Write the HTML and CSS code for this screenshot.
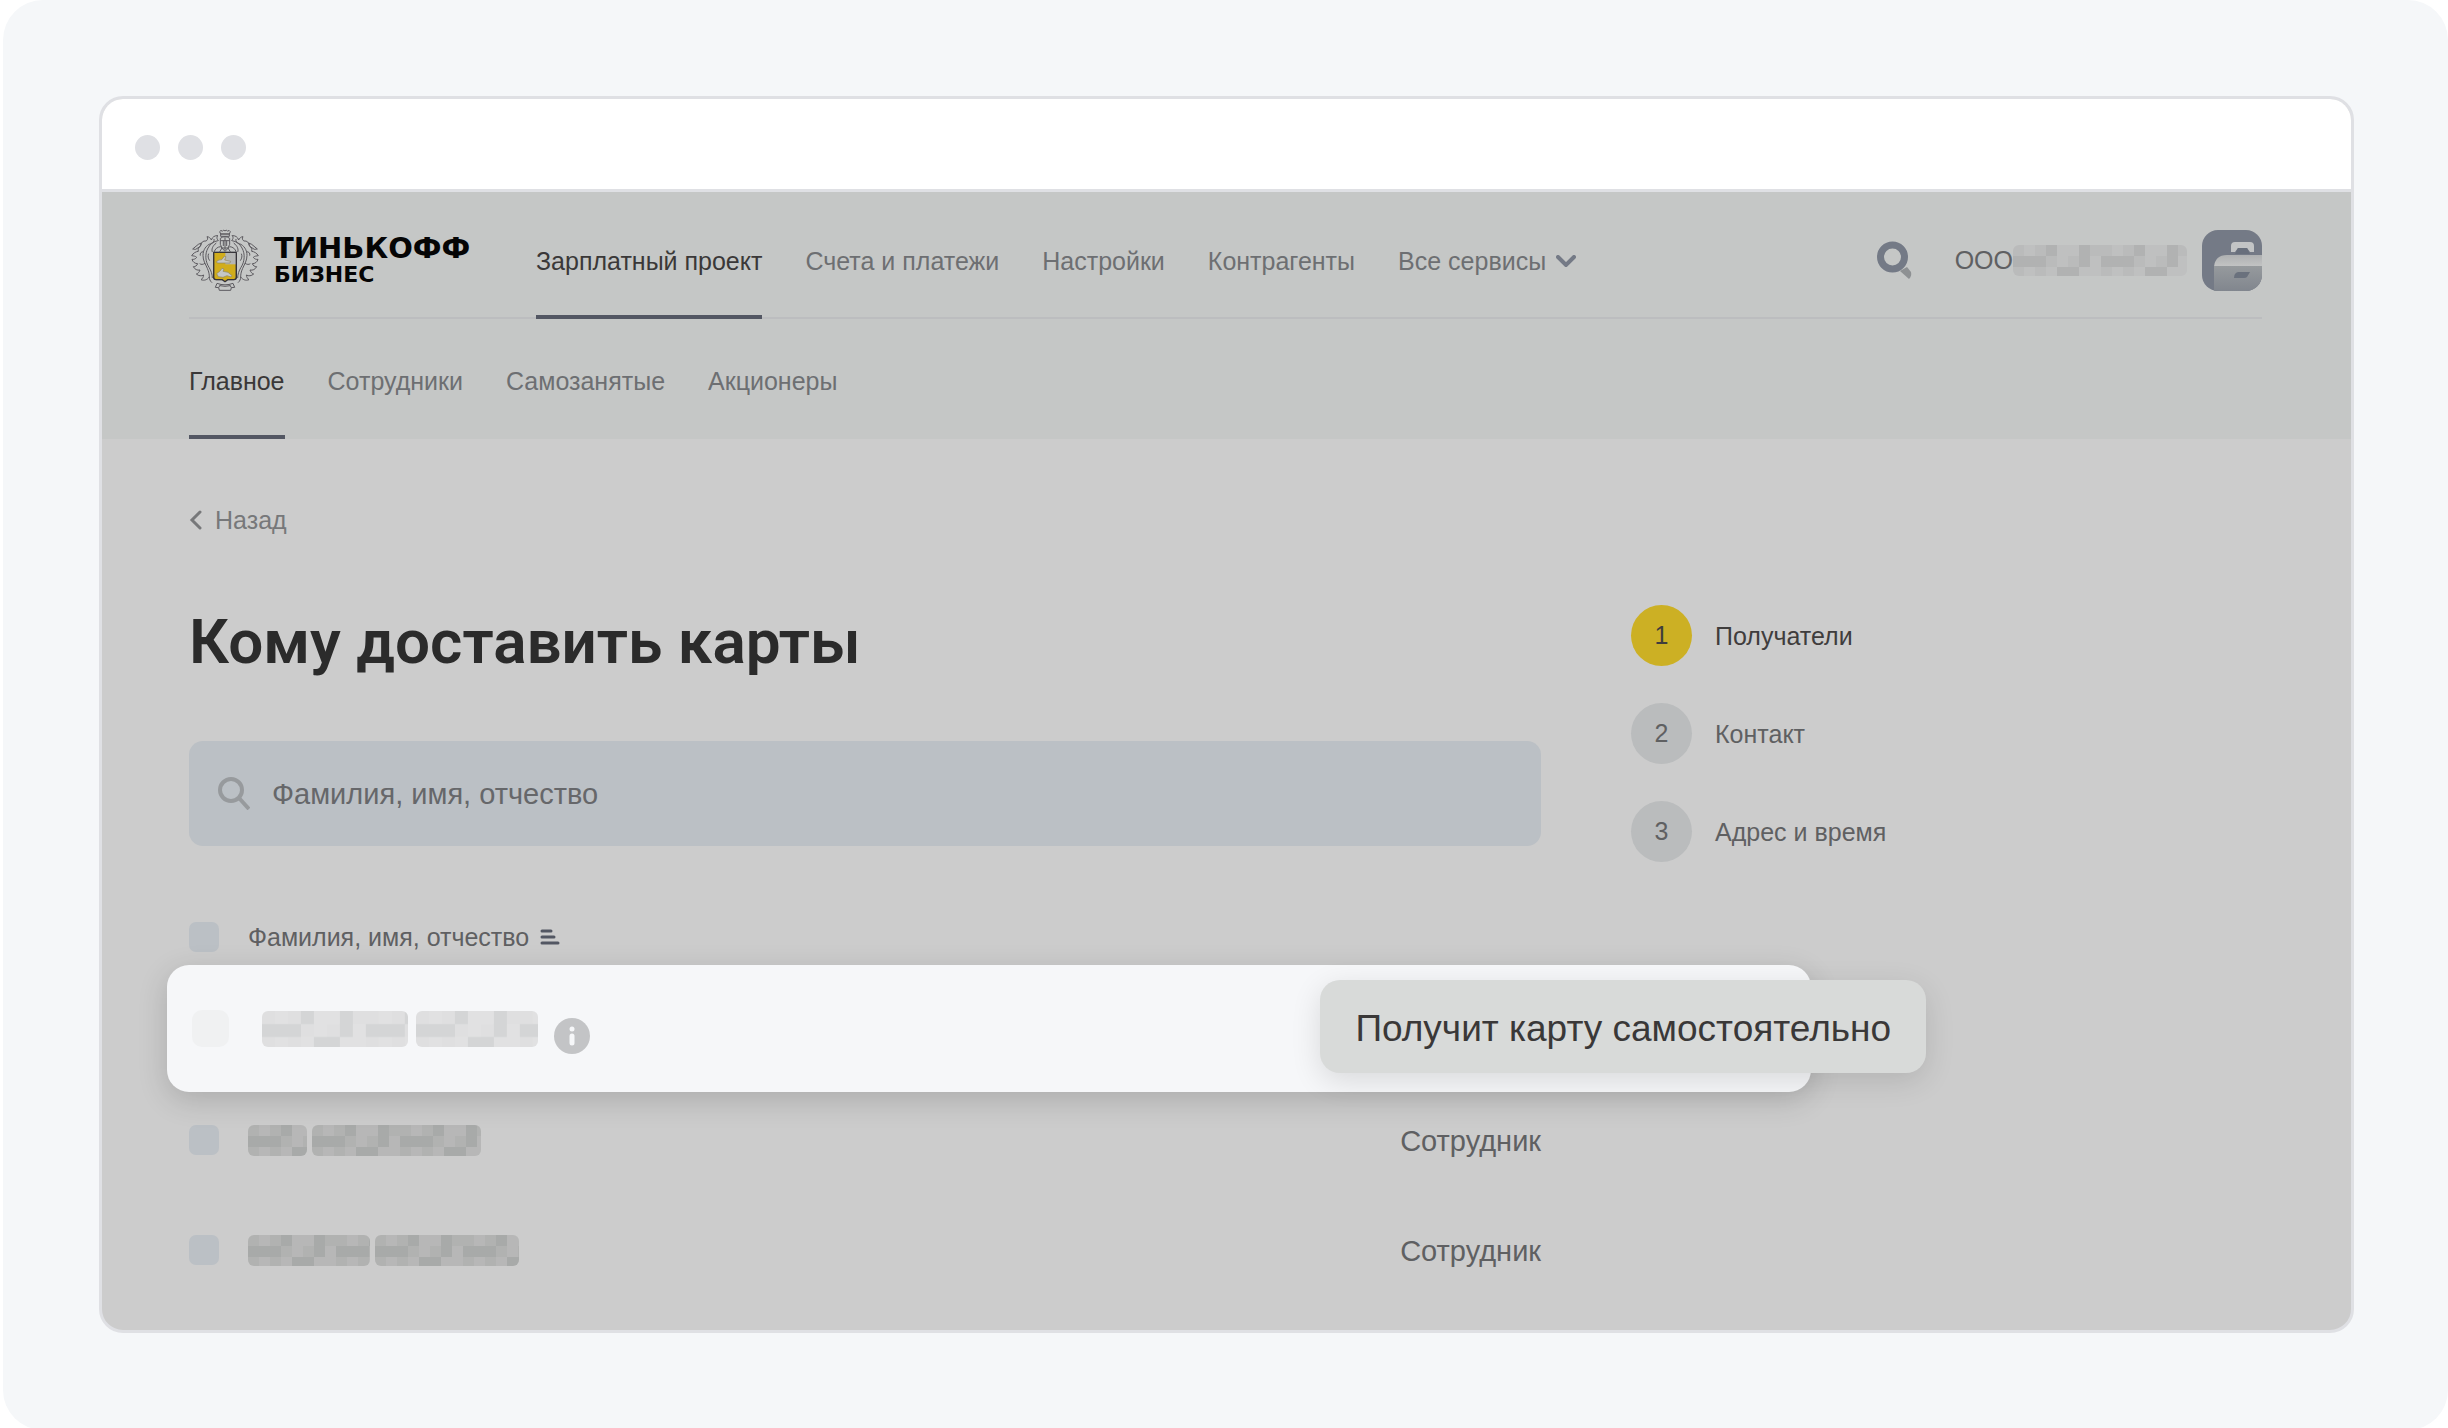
FILE: index.html
```html
<!DOCTYPE html>
<html lang="ru">
<head>
  <meta charset="UTF-8" />
  <title>Кому доставить карты</title>
  <meta name="viewport" content="width=device-width, initial-scale=1.0" />
  <link rel="stylesheet" href="styles.css">
</head>
<body>
  <!-- shared pattern for hidden names -->
  <svg class="defs" aria-hidden="true">
    <defs>
      <pattern id="mosaic" width="88" height="31" patternUnits="userSpaceOnUse">
        <path class="mosaic-light" d="M11 0h11v11H11zM44 0h22v11H44zM44 11h11v11H44zM77 11h11v11H77zM11 22h11v9H11zM33 22h11v9H33zM66 22h22v9H66z"/>
        <path class="mosaic-dark" d="M33 0h11v11H33zM66 0h11v11H66zM0 11h33v11H0zM66 11h11v11H66zM44 22h22v9H44z"/>
      </pattern>
      <pattern id="mosaic-lg" href="#mosaic" patternTransform="scale(1.18)"/>
    </defs>
  </svg>

  <div class="stage">
    <div class="window">
      <div class="titlebar"><span class="dot"></span><span class="dot"></span><span class="dot"></span></div>

      <header class="header">
        <div class="topbar">
          <a class="logo" href="#">
            <svg class="crest" viewBox="15 13 204 186" aria-hidden="true">
              <g id="wing">
                <path d="M98 48C91 43 92 36 96 33C86 32 79 37 76 46C74 41 69 36 63 36C67 42 64 47 60 49C51 48 45 53 44 63C38 67 35 74 37 80C29 81 22 85 17 93C23 94 28 94 32 98C29 103 23 105 18 104C20 112 27 117 35 117C33 123 28 126 22 126C26 134 34 138 42 136C40 142 37 146 31 148C38 154 46 155 53 151C52 157 50 162 45 165C55 169 64 165 70 157C70 163 72 169 78 174"/>
                <path d="M96 48C83 50 72 58 66 70C56 88 58 111 69 128C75 138 79 149 79 160M84 43C86 50 81 55 74 57C60 62 51 76 51 92C51 108 58 117 64 131C69 142 70 150 70 157M91 55C79 64 76 75 79 82M53 81C45 81 41 86 43 93M57 116C51 120 45 120 41 117M71 108C66 101 65 93 68 87M20 73L37 59L46 55L43 65L29 74z"/>
              </g>
              <use href="#wing" transform="matrix(-1 0 0 1 234 0)"/>
              <path class="crest-shield" d="M83 83h68v75q0 7-7 7h-19l-8 6-8-6H90q-7 0-7-7z"/>
              <path class="crest-gray" d="M118 83h33v36h-33z"/>
              <path class="crest-fill crest-beast" d="M91 111q8-7 16-6l8-10 5 1-4 10 18 4-2 5H94zM92 147l10-8 6-8 6 2-3 7 15 3 12 10-3 4-12-4-12 5-14-2z"/>
              <path class="crest-border" d="M83 83h68v75q0 7-7 7h-19l-8 6-8-6H90q-7 0-7-7z"/>
              <path class="crest-fill" d="M101 21l4-4 4 3 4-4 4 3 4-3 4 4 4-3 4 4-3 7h-26zM104 28h26v7h-26zM103 41q14-10 28 0v18l-5 11h-18l-5-11z"/>
              <path d="M104 48h26M112 48v16M122 48v16M117 38v38M84 83q5-16 20-17l13 14 14-14q15 1 20 17M108 70l-8 13M126 70l8 13"/>
              <path class="crest-fill" d="M93 176q24 9 48 0l5 12-10 1-2 8h-34l-2-8-10-1z"/>
              <path d="M102 183q15 4 30 0M98 189l5-9M136 189l-5-9"/>
            </svg>
            <span class="logo-text">
              <span class="logo-name">ТИНЬКОФФ</span>
              <span class="logo-sub">БИЗНЕС</span>
            </span>
          </a>

          <nav class="nav">
            <a class="nav-link active" href="#">Зарплатный проект</a>
            <a class="nav-link" href="#">Счета и платежи</a>
            <a class="nav-link" href="#">Настройки</a>
            <a class="nav-link" href="#">Контрагенты</a>
            <button class="nav-link nav-more" type="button">
              Все сервисы
              <svg width="20" height="12" viewBox="0 0 20 12" aria-hidden="true"><path d="M2 2l8 8 8-8"/></svg>
            </button>
          </nav>

          <div class="account">
            <button class="icon-button" type="button" aria-label="Поиск">
              <svg width="35" height="38" viewBox="0 0 35 38" aria-hidden="true">
                <path d="M23 30l7-4 4 5q1 4-2 7z" fill="#8e9193"/>
                <circle cx="15.500" cy="16" r="12" fill="none" stroke="#747a86" stroke-width="7"/>
              </svg>
            </button>
            <div class="company">ООО <svg class="hidden-name hidden-soft" width="174" height="31"><rect width="100%" height="100%" fill="url(#mosaic)"/></svg></div>
            <svg class="avatar" width="60" height="61" viewBox="0 0 60 61" aria-hidden="true">
              <defs>
                <linearGradient id="lid" x1="0" y1="0" x2="0" y2="1"><stop offset="0" stop-color="#aeb0b1"/><stop offset="1" stop-color="#c4c5c5"/></linearGradient>
                <linearGradient id="case" x1="0" y1="0" x2="0" y2="1"><stop offset="0" stop-color="#969a9d"/><stop offset="1" stop-color="#81868e"/></linearGradient>
              </defs>
              <path d="M29 22v-6q0-4 4-4h15q4 0 4 4v6h-4l-3-4H36l-3 4z" fill="#c2c4c5"/>
              <path d="M36 18h9l3 6H33z" fill="#686f7c"/>
              <path d="M12 37q1-12 13-12h35v12z" fill="url(#lid)"/>
              <path d="M12 36h48v25H12z" fill="url(#case)"/>
              <path d="M36 42h12l-3 5q-1 1-3 1H32q0-5 4-6z" fill="#6a717d"/>
            </svg>
          </div>
        </div>

        <nav class="nav subnav">
          <a class="nav-link active" href="#">Главное</a>
          <a class="nav-link" href="#">Сотрудники</a>
          <a class="nav-link" href="#">Самозанятые</a>
          <a class="nav-link" href="#">Акционеры</a>
        </nav>
      </header>

      <main class="page">
        <a class="back" href="#">
          <svg width="14" height="20" viewBox="0 0 14 20" aria-hidden="true"><path d="M11 2l-8 8 8 8"/></svg>
          Назад
        </a>

        <div class="columns">
          <section class="recipients">
            <h1>Кому доставить карты</h1>

            <label class="search">
              <svg width="32" height="33" viewBox="0 0 32 33" aria-hidden="true"><circle cx="13" cy="13" r="11"/><path d="M21 21l10 11"/></svg>
              <input type="text" placeholder="Фамилия, имя, отчество" aria-label="Фамилия, имя, отчество" />
            </label>

            <table class="people">
              <thead>
                <tr>
                  <th class="col-check"><input type="checkbox" class="check" aria-label="Выбрать всех" /></th>
                  <th colspan="2">
                    <span class="sort">Фамилия, имя, отчество
                      <svg width="20" height="17" viewBox="0 0 20 17" aria-hidden="true"><path d="M2 2h9M2 8h12M2 14h16"/></svg>
                    </span>
                  </th>
                </tr>
              </thead>
              <tbody>
                <tr>
                  <td class="col-card" colspan="3">
                    <div class="card">
                      <input type="checkbox" class="check check-lg" aria-label="Выбрать сотрудника" />
                      <div class="names names-lg">
                        <svg class="hidden-name hidden-light" width="146" height="36"><rect width="100%" height="100%" fill="url(#mosaic-lg)"/></svg>
                        <svg class="hidden-name hidden-light" width="122" height="36"><rect width="100%" height="100%" fill="url(#mosaic-lg)"/></svg>
                      </div>
                      <svg class="info" width="36" height="36" viewBox="0 0 36 36" aria-hidden="true">
                        <circle cx="18" cy="18" r="18" fill="#c3c4c6"/>
                        <circle cx="18" cy="11" r="2.500" fill="#f6f7f9"/>
                        <path d="M18 18v7" stroke="#f6f7f9" stroke-width="5" stroke-linecap="round"/>
                      </svg>
                      <div class="tooltip">Получит карту самостоятельно</div>
                    </div>
                  </td>
                </tr>
                <tr>
                  <td class="col-check"><input type="checkbox" class="check" aria-label="Выбрать сотрудника" /></td>
                  <td>
                    <div class="names">
                      <svg class="hidden-name" width="59" height="31"><rect width="100%" height="100%" fill="url(#mosaic)"/></svg>
                      <svg class="hidden-name" width="169" height="31"><rect width="100%" height="100%" fill="url(#mosaic)"/></svg>
                    </div>
                  </td>
                  <td class="role">Сотрудник</td>
                </tr>
                <tr>
                  <td class="col-check"><input type="checkbox" class="check" aria-label="Выбрать сотрудника" /></td>
                  <td>
                    <div class="names">
                      <svg class="hidden-name" width="122" height="31"><rect width="100%" height="100%" fill="url(#mosaic)"/></svg>
                      <svg class="hidden-name" width="144" height="31"><rect width="100%" height="100%" fill="url(#mosaic)"/></svg>
                    </div>
                  </td>
                  <td class="role">Сотрудник</td>
                </tr>
              </tbody>
            </table>
          </section>

          <ol class="steps">
            <li class="step current"><span class="step-num">1</span>Получатели</li>
            <li class="step"><span class="step-num">2</span>Контакт</li>
            <li class="step"><span class="step-num">3</span>Адрес и время</li>
          </ol>
        </div>
      </main>
    </div>
  </div>
</body>
</html>
```
FILE: styles.css
```css
* { box-sizing: border-box; }

body {
  margin: 0;
  background: #fff;
  color: #5f6062;
  font-family: "Liberation Sans", Arial, sans-serif;
  font-size: 25px;
  line-height: 30px;
}

a { color: inherit; text-decoration: none; }

button {
  padding: 0;
  border: none;
  background: none;
  color: inherit;
  font: inherit;
}

svg { display: block; flex: none; }

.defs { position: absolute; width: 0; height: 0; }

/* outer frame */
.stage {
  min-height: 100vh;
  margin-left: 3px;
  padding: 96px 94px 97px 96px;
  background: #f5f7f9;
  border-radius: 40px;
}

.window {
  overflow: hidden;
  background: #ccc;
  border: 3px solid #dfe0e4;
  border-radius: 24px;
}

.titlebar {
  display: flex;
  align-items: center;
  gap: 18px;
  height: 93px;
  padding: 6px 33px 0;
  background: #fff;
  border-bottom: 3px solid #dfe0e4;
}

.dot {
  width: 25px;
  height: 25px;
  border-radius: 50%;
  background: #dfe0e4;
}

/* header */
.header {
  padding: 0 89px 0 87px;
  background: #c5c7c6;
}

.topbar {
  display: flex;
  align-items: center;
  padding-top: 11px;
  border-bottom: 2px solid #bcbdbf;
}

.logo {
  display: flex;
  align-items: center;
  gap: 15px;
  width: 347px;
  padding-left: 2px;
  color: #050505;
  font-family: "DejaVu Sans", sans-serif;
  font-weight: bold;
}

.crest {
  width: 68px;
  height: 62px;
  fill: none;
  stroke: #5c5a5f;
  stroke-width: 3;
  stroke-linejoin: round;
}

.crest-fill { fill: #c5c7c6; }
.crest-beast { stroke: #8d8560; stroke-width: 2; }
.crest-gray { fill: #b5b6b5; stroke: none; }
.crest-shield { fill: #d1ad1c; }
.crest-border { stroke: #36343a; stroke-width: 4; }

.logo-text { display: flex; flex-direction: column; }
.logo-name { font-size: 29px; line-height: 30px; }
.logo-sub { font-size: 22px; line-height: 24px; }

.nav {
  display: flex;
  gap: 43px;
}

.topbar .nav { margin-bottom: -2px; }

.nav-link {
  padding: 43px 0 39px;
  border-bottom: 4px solid transparent;
  color: #6d6f72;
  white-space: nowrap;
}

.nav-link.active {
  color: #3a3838;
  border-bottom-color: #535763;
}

.nav-more {
  display: flex;
  align-items: center;
  gap: 10px;
}

.nav-more svg, .back svg {
  fill: none;
  stroke: #747a86;
  stroke-width: 4;
  stroke-linecap: round;
}

.back svg { stroke: #77787a; stroke-width: 3; }

.subnav .nav-link { padding-top: 47px; }

.account {
  display: flex;
  align-items: center;
  gap: 15px;
  margin-left: auto;
}

.icon-button { margin-right: 28px; }

.company {
  display: flex;
  align-items: center;
}

.avatar { border-radius: 16px; background: #747a86; }

/* pixelated names */
.hidden-name {
  border-radius: 6px;
  background: #b1b2b1;
}

.hidden-soft { background: #babbbb; }
.hidden-light { background: #dfdfe0; }
.mosaic-light { fill: rgba(255, 255, 255, 0.07); }
.mosaic-dark { fill: rgba(0, 20, 10, 0.05); }

.names { display: flex; gap: 5px; }
.names-lg { gap: 8px; }

/* page */
.page { padding: 66px 89px 25px 87px; }

.back {
  display: inline-flex;
  align-items: center;
  gap: 12px;
  color: #77787a;
}

.columns {
  display: grid;
  grid-template-columns: 15fr 7fr;
  gap: 90px;
  margin-top: 69px;
}

h1 {
  margin: 0 0 62px;
  color: #2b2b2b;
  font-family: Roboto, sans-serif;
  font-size: 62px;
  font-weight: 600;
  line-height: 74px;
}

.search {
  display: flex;
  align-items: center;
  gap: 22px;
  height: 105px;
  padding: 0 29px;
  border-radius: 14px;
  background: #bbc0c5;
}

.search svg {
  fill: none;
  stroke: #979a9d;
  stroke-width: 4;
}

.search input {
  flex: 1;
  padding: 0;
  border: none;
  outline: none;
  background: none;
  color: #5f6062;
  font: inherit;
  font-size: 29px;
}

.search input::placeholder { color: #66676a; opacity: 1; }

.people {
  width: 100%;
  margin-top: 53px;
  border-collapse: collapse;
}

.people th {
  height: 76px;
  padding: 0;
  font-weight: normal;
  text-align: left;
}

.people td { height: 110px; padding: 0; }
.people .col-check { width: 59px; }
.people .col-card { position: relative; }

.check {
  appearance: none;
  display: block;
  flex: none;
  width: 30px;
  height: 30px;
  margin: 0;
  border-radius: 7px;
  background: #bbc0c5;
}

.check-lg {
  width: 37px;
  height: 37px;
  margin-right: 33px;
  border-radius: 10px;
  background: #f0f1f2;
}

.sort {
  display: flex;
  align-items: center;
  gap: 11px;
}

.sort svg {
  fill: none;
  stroke: #535763;
  stroke-width: 3;
  stroke-linecap: round;
}

.people .role {
  padding-top: 2px;
  font-size: 29px;
  text-align: right;
}

/* highlighted row */
.card {
  position: absolute;
  top: -10px;
  left: -22px;
  right: -270px;
  display: flex;
  align-items: center;
  height: 127px;
  padding-left: 25px;
  border-radius: 22px;
  background: #f6f7f9;
  box-shadow: 0 8px 30px rgba(0, 0, 0, 0.16);
}

.info { margin: 14px 0 0 16px; }

.tooltip {
  position: absolute;
  top: 15px;
  right: -115px;
  padding: 4px 35px 0;
  border-radius: 20px;
  background: #d8dad9;
  box-shadow: 0 8px 30px rgba(0, 0, 0, 0.12);
  color: #3a3838;
  font-size: 37px;
  line-height: 89px;
  white-space: nowrap;
}

/* steps */
.steps {
  display: flex;
  flex-direction: column;
  gap: 37px;
  margin: 0;
  padding: 0;
  list-style: none;
}

.step {
  display: flex;
  align-items: center;
  gap: 23px;
}

.step.current { color: #3f3d3d; }

.step-num {
  width: 61px;
  border-radius: 50%;
  background: #babcbd;
  line-height: 61px;
  text-align: center;
}

.current .step-num { background: #ccb024; }
```
